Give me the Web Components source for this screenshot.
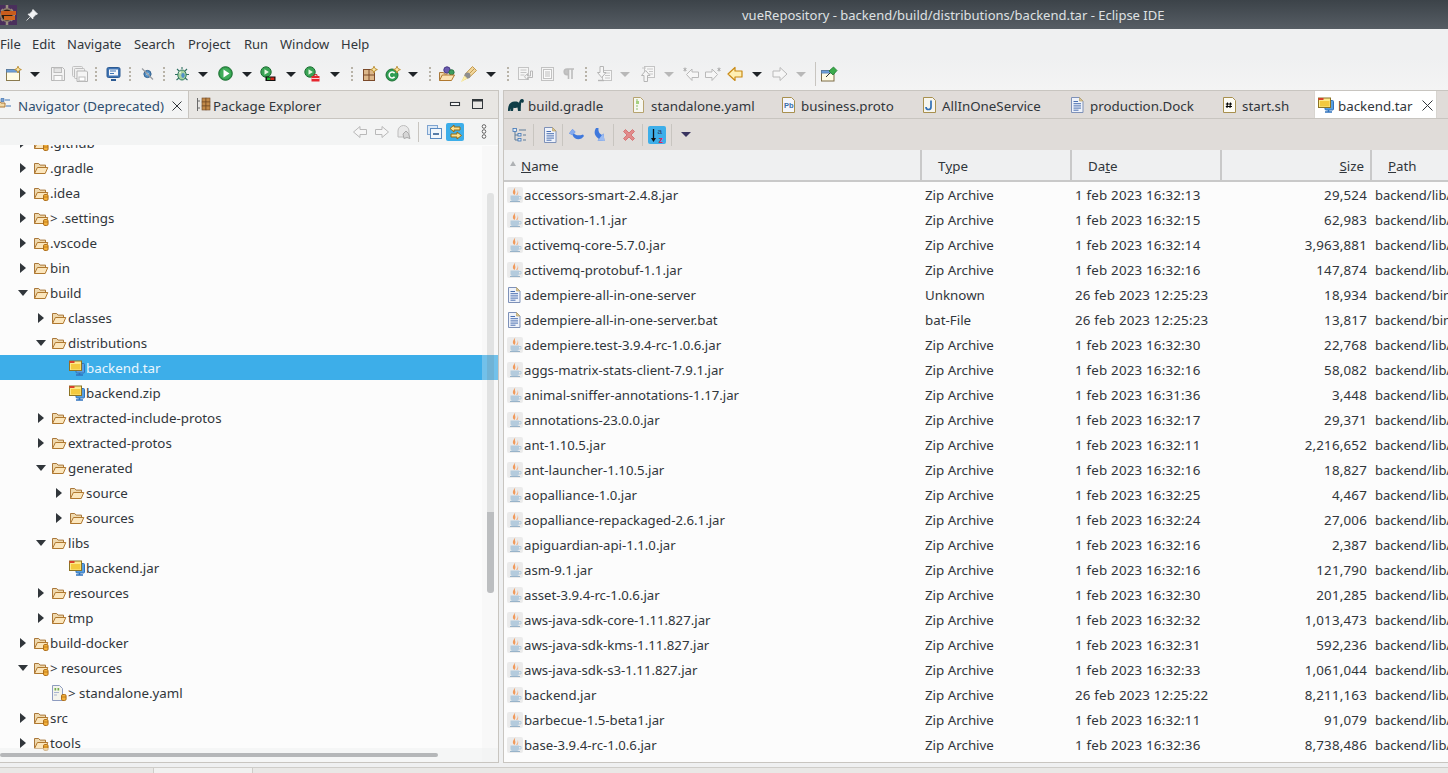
<!DOCTYPE html>
<html><head><meta charset="utf-8"><style>
html,body{margin:0;padding:0;height:773px;overflow:hidden;background:#eff0f1;font:13.33px "Noto Sans",sans-serif;color:#31363b}
</style></head><body>
<ide-window></ide-window>
<script>
const star=(x=11.5,y=3.5)=>`<path transform="translate(${x} ${y})" d="M0-3.4 1-1 3.4 0 1 1 0 3.4-1 1-3.4 0-1-1z" fill="#fbe9a8" stroke="#b98a2e" stroke-width=".9"/>`;
const lock=`<rect x="10.5" y="9.5" width="4.6" height="6" rx="1.4" fill="#f4b23c" stroke="#a8650f" stroke-width=".9"/><path d="M10.8 12h4.2" stroke="#a8650f" stroke-width=".7"/>`;
const folder=`<path d="M1.5 13.5V3.5h4.2l1.4 1.6h5.4v2.4" fill="#efd9ae" stroke="#a9773a"/><path d="M1.5 13.5 4.4 7.5h10.4l-2.6 6z" fill="#fbe6bd" stroke="#b0782f" stroke-linejoin="round"/>`;
const tar=`<path d="M7 15h7M10.5 12v3" stroke="#2f72bd" stroke-width="1.6"/><rect x="7" y="3.500" width="8.500" height="9.500" rx="1" fill="#5a9fe0" stroke="#2f72bd"/><rect x=".5" y="1" width="12" height="9.500" fill="#fde98a" stroke="#8c7424"/><rect x=".5" y="1" width="5" height="2" fill="#d8402c"/><rect x="2" y="4" width="9.500" height="5.500" fill="#f3c93f"/>`;
const ghostArrow=(d)=>`<path d="${d}" fill="#f6f6f6" stroke="#b9b9b9" stroke-linejoin="round"/>`;
const ICONS={
 newWizard:`<rect x=".5" y="3.5" width="13" height="11" fill="#fffbe4" stroke="#8a7a4e"/><rect x=".5" y="3.5" width="13" height="2.6" fill="#6f9fd8" stroke="#4f78a8" stroke-width=".6"/>${star(12,3.6)}`,
 save:`<path d="M1.5 1.5h11l2 2v11h-13z" fill="#f3f3f3" stroke="#b5b5b5"/><rect x="4" y="2" width="7.5" height="4.5" fill="#e4e4e4" stroke="#bdbdbd"/><rect x="4" y="9.5" width="8" height="5" fill="#fafafa" stroke="#bdbdbd"/>`,
 saveAll:`<rect x=".5" y=".5" width="10" height="10" rx="1" fill="#f0f0f0" stroke="#c2c2c2"/><rect x="2.5" y="2.5" width="10" height="10" rx="1" fill="#f0f0f0" stroke="#bdbdbd"/><path d="M5 5h9.5l1 1v9.5H5z" fill="#f5f5f5" stroke="#b5b5b5"/><rect x="7" y="11" width="6" height="4" fill="#fff" stroke="#bdbdbd"/>`,
 monitor:`<rect x="1" y="1.5" width="13" height="10" rx="1.5" fill="#3f74b5" stroke="#2c5a92"/><rect x="3" y="3.5" width="9" height="6" fill="#f3f6fa"/><path d="M4 5h6M4 7.5h4" stroke="#3f74b5" stroke-width="1.2"/><path d="M5 14h5" stroke="#2c5a92" stroke-width="2"/>`,
 skip:`<ellipse cx="7.5" cy="8" rx="3.6" ry="3.6" fill="#4f8fc7" stroke="#315f8c"/><circle cx="7.5" cy="8" r="1.2" fill="#cfe3f4"/><path d="M2 2.5 13 13.5" stroke="#9a9da2" stroke-width="1.3"/>`,
 bug:`<path d="M3 3l3 3M13 3l-3 3M1 8.5h3M15 8.5h-3M2.5 14l3-2.5M13.5 14l-3-2.5M8 1v2" stroke="#2f6f62" stroke-width="1.1"/><ellipse cx="8" cy="9" rx="4.2" ry="5" fill="#a9d3a0" stroke="#2f7a5e"/><ellipse cx="9" cy="9.5" rx="1.7" ry="2.4" fill="#4f8fc7"/><circle cx="6" cy="6.5" r="1" fill="#e9f5e4"/>`,
 run:`<circle cx="7.5" cy="7.5" r="6.8" fill="#2e9b48" stroke="#1d7034"/><circle cx="7.5" cy="7.5" r="5.4" fill="#41ad5b"/><path d="M5.5 3.6v7.8l6-3.9z" fill="#fff"/>`,
 runExt:`<circle cx="6" cy="6" r="5.2" fill="#3aa455" stroke="#1d7034"/><path d="M4.5 3.2v5.6l4.4-2.8z" fill="#e7f6e2"/><rect x="5.5" y="10.5" width="10" height="4.5" fill="#111"/><rect x="7" y="11.5" width="3.5" height="2.5" fill="#19b52f"/><rect x="10.5" y="11.5" width="3.8" height="2.5" fill="#d4261c"/>`,
 runTool:`<circle cx="6" cy="6" r="5.2" fill="#3aa455" stroke="#1d7034"/><path d="M4.5 3.2v5.6l4.4-2.8z" fill="#e7f6e2"/><rect x="7.5" y="10" width="8" height="5.5" fill="#e6262e"/><path d="M10 10V8.7h3V10" fill="none" stroke="#c01c22"/><path d="M7.5 12.5h8" stroke="#fff" stroke-width=".8"/>`,
 newPkg:`<rect x="1.5" y="3.5" width="11" height="11" fill="#dcb78a" stroke="#7b4a2a"/><path d="M7 3.5v11M1.5 9h11" stroke="#7b4a2a"/>${star(12,3.6)}`,
 newClass:`<circle cx="7" cy="9" r="6" fill="#2f9e52" stroke="#1d7034"/><path d="M9.6 7.2A3 3 0 1 0 9.6 10.8" fill="none" stroke="#fff" stroke-width="1.6"/>${star(12,3.6)}`,
 openRes:`<circle cx="8" cy="4" r="3.2" fill="#6b5bb0" stroke="#463a85"/><circle cx="12.5" cy="6.3" r="2.6" fill="#3d9d5e" stroke="#2a7343"/><path d="M.5 14.5V6.5h4l1 1.5h3" fill="#f2dcae" stroke="#a9773a"/><path d="M.5 14.5 3.3 9h12.2l-3 5.5z" fill="#fbe3b3" stroke="#b0782f" stroke-linejoin="round"/>`,
 pen:`<path d="M2 14 4.8 7.500 11.500 .5l4 4-7 6.700z" fill="#f1d69c" stroke="#c39a4e"/><path d="M9 7 13 3" stroke="#c39a4e"/><circle cx="6.500" cy="9.500" r="3" fill="#8e8e8e"/><path d="M.5 15.500 3.500 10l2.400 2.400z" fill="#fff0a8" stroke="#f5e7a0" stroke-width=".8"/>`,
 nextAnn:`<rect x=".5" y="1.5" width="10" height="12" fill="#f5f5f5" stroke="#c4c4c4"/><path d="M2.5 4h6M2.5 6.5h6M2.5 9h4" stroke="#c4c4c4"/><path d="M14.5 5v6.5H9.5V14l-3-3.2 3-3.2v2.4h3V5z" fill="#f6f6f6" stroke="#b9b9b9"/>`,
 blockSel:`<rect x="1.5" y="1.5" width="12" height="13" fill="#f5f5f5" stroke="#c2c2c2"/><rect x="3.5" y="3.5" width="8" height="9" fill="#fbfbfb" stroke="#c2c2c2"/><path d="M5 6h5M5 8h5M5 10h5" stroke="#bdbdbd"/>`,
 pilcrow:`<path d="M6.5 13V3H5a2.8 2.8 0 0 0 0 5.6h1.5M6.5 3H12M10 3v10" fill="#c4c4c4" stroke="#bcbcbc" stroke-width="1.6"/>`,
 nextDown:`<rect x="6.5" y="4.5" width="9" height="10" fill="#f7f7f7" stroke="#c4c4c4"/><path d="M9 7h5M9 9.5h5M9 12h5" stroke="#c8c8c8"/><path d="M4 .5h3.5v6H10L5.7 11.5 1.5 6.5H4z" fill="#f6f6f6" stroke="#b5b5b5"/><path d="M2 14.5h6" stroke="#b5b5b5" stroke-width="1.4"/>`,
 prevUp:`<rect x="4.5" y=".5" width="10" height="11" fill="#f7f7f7" stroke="#c4c4c4"/><path d="M7 3h6M9 5.5h4M9 8h4M2 2h4" stroke="#c8c8c8"/><path d="M4 15.5h3.5v-6H10L5.7 4.5 1.5 9.5H4z" fill="#f6f6f6" stroke="#b5b5b5"/>`,
 lastEdit:`<path d="M.5 2 3.500 5M3.500 2 .5 5M2 1.500v4" stroke="#a5a5a5" stroke-width=".9"/>${ghostArrow("M15.500 6v5.500H9V14.500L3.500 8.500 9 3v3z")}`,
 nextEdit:`<path d="M12.500 2 15.500 5M15.500 2 12.500 5M14 1.500v4" stroke="#a5a5a5" stroke-width=".9"/>${ghostArrow("M.5 6v5.500H7V14.500l5.500-6L7 3v3z")}`,
 back:`<path d="M15 5v6H8v3.5L1 8l7-6.5V5z" fill="#fff0b3" stroke="#c98a14" stroke-linejoin="round" stroke-width="1.2"/>`,
 fwdGhost:ghostArrow("M1 5v6h7v3.5L15 8 8 1.5V5z"),
 pinEditor:`<rect x=".5" y="4.5" width="12.5" height="10.5" fill="#fffbe4" stroke="#7c6c46"/><rect x=".5" y="4.5" width="12.5" height="2.6" fill="#6f9fd8" stroke="#4f78a8" stroke-width=".6"/><path d="M5 11 9 7" stroke="#333"/><path d="M8 5l4.500-4 3.500 3.500-4 4.500z" fill="#3cab4b" stroke="#207c30" stroke-width=".8"/>`,
 navIcon:`<path d="M-4 4.500h6l1 1.500h4v4H-4z" fill="#f1d9a6" stroke="#a9773a"/><path d="M3 1.500h3v3H3z" fill="#7ea4d0" stroke="#3f74b5" stroke-width=".7"/><path d="M7 3h5" stroke="#3f74b5"/><path d="M8 9h5" stroke="#3f74b5"/>`,
 pkg:`<path d="M.5 1v13M.5 4H3M.5 11H3" stroke="#6a6a6a"/><rect x="5" y="1" width="4" height="4" fill="#c28a4a" stroke="#6d4522" stroke-width=".6"/><rect x="9" y="1" width="4" height="4" fill="#c28a4a" stroke="#6d4522" stroke-width=".6"/><rect x="5" y="5" width="4" height="4" fill="#c28a4a" stroke="#6d4522" stroke-width=".6"/><rect x="9" y="5" width="4" height="4" fill="#c28a4a" stroke="#6d4522" stroke-width=".6"/><rect x="5" y="9" width="4" height="4" fill="#c28a4a" stroke="#6d4522" stroke-width=".6"/><rect x="9" y="9" width="4" height="4" fill="#c28a4a" stroke="#6d4522" stroke-width=".6"/>`,
 min:`<rect x="2.500" y="5.500" width="9" height="3" fill="#fff" stroke="#31363b" stroke-width="1.100"/>`,
 max:`<rect x="2.500" y="2.500" width="10" height="9" fill="none" stroke="#31363b"/><path d="M2.500 3.500h10" stroke="#31363b" stroke-width="2"/>`,
 vBack:ghostArrow("M14.500 5.500v5H8v3L1.500 8 8 2.500v3z"),
 vFwd:ghostArrow("M1.500 5.500v5H8v3L14.500 8 8 2.500v3z"),
 vSync:`<path d="M2 7a5.500 5.500 0 0 1 11 0v6H2z" fill="#e9e9e9" stroke="#bdbdbd"/><path d="M10 7 7 10 8 14.500l3-1 3 1-1.500-5z" fill="#d6d6d6" stroke="#a9a9a9"/>`,
 collapse:`<rect x=".5" y="1.500" width="10" height="9" fill="#dce9f6" stroke="#7ea4d0"/><rect x="3.500" y="4.500" width="11" height="10" fill="#f2f7fc" stroke="#5a8ac0"/><path d="M6 10h6" stroke="#2f5d93" stroke-width="1.600"/>`,
 link:`<path d="M7 1v2h6v3H7v2L3 4.500z" fill="#fbe08f" stroke="#9a6a10" stroke-linejoin="round"/><path d="M10 8v2H4v3h6v2l4.500-3.500z" fill="#fbe08f" stroke="#9a6a10" stroke-linejoin="round"/>`,
 kebab:`<circle cx="8" cy="2.500" r="1.800" fill="#fff" stroke="#555" stroke-width=".9"/><circle cx="8" cy="7.500" r="1.800" fill="#fff" stroke="#555" stroke-width=".9"/><circle cx="8" cy="12.500" r="1.800" fill="#fff" stroke="#555" stroke-width=".9"/>`,
 folder,folderL:folder+lock,
 tar,
 yaml:`<path d="M2.500 .5h7l3 3v12h-10z" fill="#f7f7f1" stroke="#b6a36e"/><path d="M6 2v11" stroke="#8bbf6a" stroke-width="1" stroke-dasharray="2 1"/><rect x="5" y="4" width="3" height="3" fill="#a5d080"/>`,
 yamlL:`<path d="M1.500 .5h7l3 3v12h-10z" fill="#f4f4ec" stroke="#8e9cc0"/><rect x="3.500" y="3" width="1.700" height="2.500" fill="#76ad50"/><rect x="6.500" y="3" width="1.700" height="2.500" fill="#76ad50"/><path d="M3 7.500h5M3 10h3" stroke="#a9b5cf"/>${lock}`,
 gradle:`<path d="M0 14c0-5 1-9 6.500-9.500 2-.2 3.500.4 4.500 1.200C11.500 3 13 1.500 14.500 2c1.500.5 1.800 2.500.8 3.500-.6.500-1.500.4-2-.2-.4 2-.5 5-.5 8.700H10l-.5-3.500c-1.300.6-2.700.6-4 .2L5 14H2.500l-.3-2.500L1.800 14z" fill="#0f3d47"/>`,
 proto:`<path d="M1.500 .5h9l3 3v12h-12z" fill="#f4f6fb" stroke="#a8904e"/><text x="3" y="11" font-family="Liberation Sans" font-size="7.500" font-weight="700" fill="#3a6ea8">Pb</text>`,
 java:`<path d="M1.500 .5h9l3 3v12h-12z" fill="#f7f6ef" stroke="#a8904e"/><path d="M9 3.500V10a2.500 2.500 0 0 1-5 0" fill="none" stroke="#2f6fb5" stroke-width="1.700"/>`,
 doc:`<path d="M1.500 .5h8l3.500 3.500v11.500H1.500z" fill="#eef2fa" stroke="#7e91b8"/><path d="M9.500 .5V4H13z" fill="#dcc590" stroke="#b6a06a" stroke-width=".7"/><path d="M3.500 4.500h4.500M3.500 6.700h7.500M3.500 8.900h7.500M3.500 11.100h7.500M3.500 13.200h5" stroke="#4a6fb0" stroke-width="1"/>`,
 sh:`<path d="M1.500 .5h9l3 3v12h-12z" fill="#fdfcf5" stroke="#a8904e"/><path d="M5.500 5.500 5 11M8.500 5.500 8 11M3.800 7H10M3.800 9.500H10" stroke="#000" stroke-width="1.100"/>`,
 jar:`<rect width="16" height="16" rx="2" fill="#ebebeb"/><path d="M8.500 .5C6.500 3 10 4.500 7.500 8 5 6 5.500 3.500 8.500 .5z" fill="#f09a5c"/><path d="M10.500 3c.5 2-.5 3.500-1.500 5h1.500c1-1.500 1-3.500 0-5z" fill="#f5b48a"/><path d="M3.500 8.500h8.500V12a2 2 0 0 1-2 2H5.500a2 2 0 0 1-2-2z" fill="#b4cbdd"/><path d="M12 9.500h2v2.500h-2" fill="none" stroke="#b4cbdd"/><path d="M3 14.500h10" stroke="#98b3c9" stroke-width="1"/>`,
 eTree:`<path d="M4 3.500v9.500M4 8h3M4 13h3" stroke="#5f7c99"/><rect x="2" y="1.500" width="3.500" height="3" fill="#dfeaf6" stroke="#3f74b5" stroke-width=".8"/><rect x="7" y="6.500" width="3" height="2.500" fill="#dfeaf6" stroke="#3f74b5" stroke-width=".8"/><rect x="7" y="11.500" width="3" height="2.500" fill="#dfeaf6" stroke="#3f74b5" stroke-width=".8"/><path d="M8 3h7M12 8h3M12 13h3" stroke="#5f7c99"/>`,
 undo:`<path d="M1 6.500 4.500 2 7.500 5 6 6.200C7.500 8.500 10.500 9 15 7.500L16 9C13.500 13 7 14 4.500 8z" fill="#3f78dc"/><path d="M1 6.500 4.500 2 7.500 5 6 6.200 4.500 8z" fill="#86abee"/>`,
 redo:`<path d="M5 1 7.500 1C7 5 9 7 11 8L12.500 6.500 13.500 14 6.500 13.500 8 12C3.500 9 2.500 5 5 1z" fill="#3f78dc"/><path d="M11 8 12.500 6.500 13.500 14 6.500 13.500 8 12z" fill="#9dbcf2"/>`,
 del:`<path d="M2.500 4.500 4.500 2.500 8 6l3.500-3.500 2 2L10 8l3.500 3.500-2 2L8 10l-3.500 3.500-2-2L6 8z" fill="#e28b8b" stroke="#d57777"/>`,
 sort:`<path d="M4.500 2v11" stroke="#111" stroke-width="1.300"/><path d="M2 11l2.500 4 2.500-4z" fill="#111"/><text x="8.500" y="7" font-family="Liberation Sans" font-size="8" fill="#2f3d66">a</text><text x="9.500" y="16" font-family="Liberation Sans" font-size="9" font-weight="700" fill="#cf2a5b">z</text>`
};
function def(name,html){customElements.define(name,class extends HTMLElement{constructor(){super();this.attachShadow({mode:'open'}).innerHTML=typeof html==='function'?html(this):html;}});}

class XIcon extends HTMLElement{connectedCallback(){if(this.shadowRoot)return;const n=this.getAttribute('n'),s=+(this.getAttribute('s')||16);this.attachShadow({mode:'open'}).innerHTML=`<style>:host{display:block;flex:none;width:${s}px;height:${s}px}svg{display:block;overflow:visible}</style><svg width="${s}" height="${s}" viewBox="0 0 16 16">${ICONS[n]||''}</svg>`;}}
customElements.define('x-icon',XIcon);

class DropArrow extends HTMLElement{connectedCallback(){if(this.shadowRoot)return;this.attachShadow({mode:'open'}).innerHTML=`<style>:host{display:block;flex:none;width:10px;height:5px;border-style:solid;border-width:5px 5px 0;box-sizing:border-box;border-color:${this.getAttribute('c')||'#1f2327'} transparent transparent}</style>`;}}
customElements.define('drop-arrow',DropArrow);

class Sep extends HTMLElement{connectedCallback(){if(this.shadowRoot)return;const dotted=this.hasAttribute('dots');this.attachShadow({mode:'open'}).innerHTML=`<style>:host{display:block;flex:none;width:${dotted?2:1}px;height:${this.getAttribute('h')||(dotted?14:24)}px;${dotted?'background:repeating-linear-gradient(#b8b3a8 0 2px,transparent 2px 4px)':'background:#c8c5c0'}}</style>`;}}
customElements.define('tool-sep',Sep);

class IconStrip extends HTMLElement{
 set items(list){let prev=0,h='';
  for(const [x,k,a] of list){const w=k==='a'?10:k==='d'?2:k==='l'?1:k==='b'?18:16;const m=x-prev;prev=x+w;
   const st=`margin-left:${m}px`;
   if(k==='a')h+=`<drop-arrow style="${st}" c="${a||'#1f2327'}"></drop-arrow>`;
   else if(k==='d')h+=`<tool-sep dots style="${st}"></tool-sep>`;
   else if(k==='l')h+=`<tool-sep style="${st}" h="${a||24}"></tool-sep>`;
   else if(k==='b')h+=`<span class="btn" style="${st}"><x-icon n="${a}"></x-icon></span>`;
   else h+=`<x-icon n="${k}" style="${st}"></x-icon>`;
  }
  this.attachShadow({mode:'open'}).innerHTML=`<style>:host{display:flex;align-items:center;height:100%}.btn{display:flex;align-items:center;justify-content:center;width:18px;height:18px;background:#3daee9;border-radius:2px;flex:none}</style>${h}`;
 }
}
customElements.define('icon-strip',IconStrip);

def('title-bar',`<style>:host{display:flex;align-items:center;height:29px;background:linear-gradient(#3c4349,#565d64);color:#dfe1e3;font-size:13px;flex:none}
.logo{width:17px;height:20px;flex:none}.pin{margin-left:9px;flex:none}.t{margin-left:704px;white-space:nowrap}</style>
<svg class="logo" viewBox="0 0 17 20" width="17" height="20"><rect width="17" height="20" fill="#4a2f5c"/><path d="M7 0v20M0 10h15M1.500 4.500l11 11M12.500 4.500l-11 11" stroke="#9a8f80" stroke-width="2.500"/><circle cx="7" cy="10" r="7" fill="#8d7e6d"/><circle cx="7" cy="10" r="5.500" fill="#2a1c12"/><rect x="1" y="6" width="15" height="4" fill="#c95c1d"/><rect x="4" y="11" width="11" height="4" fill="#d0661f"/></svg>
<svg class="pin" width="12" height="12" viewBox="0 0 12 12"><path d="M7 .5 11.500 5 9.500 5.800 7 8.500 6.800 10 2 5.200l1.500-.3L6.200 2.500zM3.800 8.200.5 11.500" fill="#f2f3f4" stroke="#f2f3f4" stroke-width=".8"/></svg>
<span class="t">vueRepository - backend/build/distributions/backend.tar - Eclipse IDE</span>`);

def('menu-bar',`<style>:host{display:flex;align-items:center;height:29px;background:#eff0f1;flex:none;white-space:nowrap;font-size:13px}span{display:block;flex:none}</style>
<span style="width:32px">File</span><span style="width:35px">Edit</span><span style="width:67px">Navigate</span><span style="width:54px">Search</span><span style="width:56px">Project</span><span style="width:36px">Run</span><span style="width:61px">Window</span><span>Help</span>`);

def('main-toolbar',`<style>:host{display:block;height:32px;background:linear-gradient(#eff0f1,#f4f4f4);flex:none}</style><icon-strip></icon-strip>`);

def('editor-tab',(el)=>`<style>:host{display:flex;align-items:center;height:100%;white-space:nowrap;flex:none;box-sizing:border-box;padding-top:2px}x-icon{margin-right:4px;margin-top:-2px}::slotted(svg){margin-left:9px}</style><x-icon n="${el.getAttribute('icon')}"></x-icon><slot></slot>`);

def('nav-panel',`<style>:host{display:flex;flex-direction:column;position:relative;width:498px;height:671px;border-top:1px solid #c8c5c0;border-bottom:1px solid #c8c5c0;border-right:1px solid #c8c5c0;flex:none;overflow:hidden;background:#fcfcfc}
.tabs{display:flex;height:27px;flex:none;background:#e8e6e3;align-items:center}
.t1{display:flex;align-items:center;height:100%;width:189px;background:#f3f4f4;border-right:1px solid #c8c5c0;flex:none;color:#2f4f6f;white-space:nowrap;padding-top:2px;box-sizing:border-box}
.t1 x-icon{margin-left:-2px;margin-right:4px;margin-top:-2px}
.t1 svg{margin-left:8px}
.t2{display:flex;align-items:center;margin-left:8px;white-space:nowrap;width:243px;padding-top:2px;flex:none}.t2 x-icon{margin-right:0;margin-top:-2px}
.mm{display:flex;gap:6px;margin-left:8px}
.bar{height:26px;flex:none;background:#f3f4f4;border-top:1px solid #c8c5c0}
.tree{flex:1;overflow:hidden;min-height:0;background:#fcfcfc}
tree-list{margin-top:-15px}
.track{position:absolute;right:0;top:55px;bottom:0;width:16px;background:rgba(238,240,240,.3)}
.th1{position:absolute;left:5px;top:47px;width:7px;height:319px;background:rgba(96,100,104,.15);border-radius:3px 3px 0 0}
.th2{position:absolute;left:5px;top:366px;width:7px;height:81px;background:#bcbec0;border-radius:0 0 3px 3px}
.htrack{position:absolute;left:0;right:0;bottom:0;height:14px;background:rgba(238,240,240,.55)}
.hth{position:absolute;left:0;top:5px;width:438px;height:4px;background:#b5b7b9;border-radius:2px}
</style>
<div class="tabs"><div class="t1"><x-icon n="navIcon"></x-icon>Navigator (Deprecated)<svg width="10" height="10" viewBox="0 0 10 10"><path d="M.5.500l9 9M9.500.500l-9 9" stroke="#31363b"/></svg></div>
<div class="t2"><x-icon n="pkg"></x-icon>Package Explorer</div><div class="mm"><x-icon n="min"></x-icon><x-icon n="max"></x-icon></div></div>
<div class="bar"><icon-strip id="vb"></icon-strip></div>
<div class="tree"><tree-list></tree-list></div>
<div class="track"><div class="th1"></div><div class="th2"></div></div>
<div class="htrack"><div class="hth"></div></div>`);

class TreeRow extends HTMLElement{connectedCallback(){if(this.shadowRoot)return;
 const l=+this.getAttribute('lv'),a=this.getAttribute('a'),n=this.getAttribute('n');
 const arrow=a==='o'?'<span class="ao"></span>':a==='c'?'<span class="ac"></span>':'';
 this.attachShadow({mode:'open'}).innerHTML=`<style>:host{display:flex;align-items:center;height:25px;white-space:nowrap;flex:none;padding-left:${18*l}px}
 :host([sel]){background:#3daee9;color:#eaf6fd}
 .aw{width:33px;display:flex;align-items:center;flex:none;justify-content:flex-start}
 .ao{display:block;margin-left:18px;border-style:solid;border-width:6px 5px 0;border-color:#31363b transparent transparent}
 .ac{display:block;margin-left:20px;border-style:solid;border-width:5px 0 5px 6px;border-color:transparent transparent transparent #31363b}
 x-icon{margin-right:1px}</style><span class="aw">${arrow}</span><x-icon n="${n}"></x-icon><slot></slot>`;}}
customElements.define('tree-row',TreeRow);

const TREE=[[0,'c','folderL','.github'],[0,'c','folder','.gradle'],[0,'c','folderL','.idea'],[0,'c','folderL','> .settings'],[0,'c','folderL','.vscode'],[0,'c','folder','bin'],[0,'o','folder','build'],[1,'c','folder','classes'],[1,'o','folder','distributions'],[2,'','tar','backend.tar',1],[2,'','tar','backend.zip'],[1,'c','folder','extracted-include-protos'],[1,'c','folder','extracted-protos'],[1,'o','folder','generated'],[2,'c','folder','source'],[2,'c','folder','sources'],[1,'o','folder','libs'],[2,'','tar','backend.jar'],[1,'c','folder','resources'],[1,'c','folder','tmp'],[0,'c','folderL','build-docker'],[0,'o','folderL','> resources'],[1,'','yamlL','> standalone.yaml'],[0,'c','folderL','src'],[0,'c','folderL','tools'],[0,'','folderL','']];
def('tree-list',`<style>:host{display:block}</style>`+TREE.map(([l,a,n,t,s])=>`<tree-row lv="${l}" a="${a}" n="${n}"${s?' sel':''}>${t}</tree-row>`).join(''));

const COLS='grid-template-columns:417px 150px 150px 150px 1fr';
class ArchRow extends HTMLElement{connectedCallback(){if(this.shadowRoot)return;
 const [n,t,d,s,p,ic]=JSON.parse(this.getAttribute('d'));
 this.attachShadow({mode:'open'}).innerHTML=`<style>:host{display:grid;${COLS};height:25px;align-items:center;white-space:nowrap;overflow:hidden}
 div{padding-left:4px;overflow:hidden}.n{display:flex;align-items:center;padding-left:3px;font-size:13.2px}.n x-icon{margin-right:1px}.s{text-align:right;padding:0 4px 0 0;letter-spacing:.2px}.d{letter-spacing:.2px}.p{font-size:13px}</style>
 <div class="n"><x-icon n="${ic}"></x-icon><span>${n}</span></div><div>${t}</div><div class="d">${d}</div><div class="s">${s}</div><div class="p">${p}</div>`;}}
customElements.define('arch-row',ArchRow);

def('arch-head',`<style>:host{display:grid;${COLS};height:30px;background:#eff0f1;border-bottom:2px solid #c9c9c9;white-space:nowrap;flex:none}
div{display:flex;align-items:center;padding:2px 0 0 16px;border-left:2px solid #c9c9c9;margin-left:-1px}
.n{border-left:0;margin:0;padding-left:17px;position:relative}.s{justify-content:flex-end;padding:2px 7px 0 0}
.m{position:absolute;left:6px;top:11px;width:0;height:0;border:solid transparent;border-width:0 3px 5px;border-bottom-color:#aeb1b4}</style>
<div class="n"><span class="m"></span><span><u>N</u>ame</span></div><div>T<u>y</u>pe</div><div>Da<u>t</u>e</div><div class="s"><u>S</u>ize</div><div><u>P</u>ath</div>`);

const J='Zip Archive',D='1 feb 2023 ',F='26 feb 2023 ';
const ROWS=[["accessors-smart-2.4.8.jar",J,D+"16:32:13","29,524"],["activation-1.1.jar",J,D+"16:32:15","62,983"],["activemq-core-5.7.0.jar",J,D+"16:32:14","3,963,881"],["activemq-protobuf-1.1.jar",J,D+"16:32:16","147,874"],["adempiere-all-in-one-server","Unknown",F+"12:25:23","18,934","backend/bin","doc"],["adempiere-all-in-one-server.bat","bat-File",F+"12:25:23","13,817","backend/bin","doc"],["adempiere.test-3.9.4-rc-1.0.6.jar",J,D+"16:32:30","22,768"],["aggs-matrix-stats-client-7.9.1.jar",J,D+"16:32:16","58,082"],["animal-sniffer-annotations-1.17.jar",J,D+"16:31:36","3,448"],["annotations-23.0.0.jar",J,D+"16:32:17","29,371"],["ant-1.10.5.jar",J,D+"16:32:11","2,216,652"],["ant-launcher-1.10.5.jar",J,D+"16:32:16","18,827"],["aopalliance-1.0.jar",J,D+"16:32:25","4,467"],["aopalliance-repackaged-2.6.1.jar",J,D+"16:32:24","27,006"],["apiguardian-api-1.1.0.jar",J,D+"16:32:16","2,387"],["asm-9.1.jar",J,D+"16:32:16","121,790"],["asset-3.9.4-rc-1.0.6.jar",J,D+"16:32:30","201,285"],["aws-java-sdk-core-1.11.827.jar",J,D+"16:32:32","1,013,473"],["aws-java-sdk-kms-1.11.827.jar",J,D+"16:32:31","592,236"],["aws-java-sdk-s3-1.11.827.jar",J,D+"16:32:33","1,061,044"],["backend.jar",J,F+"12:25:22","8,211,163"],["barbecue-1.5-beta1.jar",J,D+"16:32:11","91,079"],["base-3.9.4-rc-1.0.6.jar",J,D+"16:32:36","8,738,486"]];

def('editor-panel',`<style>:host{display:flex;flex-direction:column;flex:1;min-width:0;height:671px;border-top:1px solid #c8c5c0;border-bottom:1px solid #c8c5c0;border-left:1px solid #c8c5c0;background:#fcfcfc;overflow:hidden;margin-left:4px}
.tabs{display:flex;height:27px;background:#e0dcd9;flex:none;border-bottom:1px solid #c8c5c0;padding-left:4px}
.active{background:#fff;border-left:1px solid #d8d5d0;border-right:1px solid #d8d5d0;width:123px;padding-left:3px}
.bar{height:31px;background:#e0dcd9;flex:none}
.rows{flex:1;overflow:hidden;min-height:0;background:#fcfcfc}</style>
<div class="tabs">
<editor-tab icon="gradle" style="width:123px">build.gradle</editor-tab>
<editor-tab icon="yaml" style="width:150px">standalone.yaml</editor-tab>
<editor-tab icon="proto" style="width:141px">business.proto</editor-tab>
<editor-tab icon="java" style="width:148px">AllInOneService</editor-tab>
<editor-tab icon="doc" style="width:152px">production.Dock</editor-tab>
<editor-tab icon="sh" style="width:92px">start.sh</editor-tab>
<editor-tab icon="tar" class="active">backend.tar<svg width="11" height="11" viewBox="0 0 11 11"><path d="M.5.500l10 10M10.500.500l-10 10" stroke="#31363b"/></svg></editor-tab>
</div>
<div class="bar"><icon-strip id="eb"></icon-strip></div>
<arch-head></arch-head>
<div class="rows">`+ROWS.map(r=>{const a=[r[0],r[1],r[2],r[3],r[4]||'backend/lib/',r[5]||'jar'];return `<arch-row d='${JSON.stringify(a)}'></arch-row>`}).join('')+`</div>`);

def('status-bar',`<style>:host{display:flex;height:7px;background:#e9e8e6;border-top:1px solid #cfcdc9;flex:none;margin-top:4px}.s{margin-left:153px;width:98px;background:#f1f1f0;border-left:1px solid #cfcdc9;border-right:1px solid #cfcdc9}</style><div class="s"></div>`);

def('ide-window',`<style>:host{display:flex;flex-direction:column;width:1448px;height:773px;overflow:hidden}.work{display:flex;flex:none;height:673px}</style>
<title-bar></title-bar><menu-bar></menu-bar><main-toolbar></main-toolbar>
<div class="work"><nav-panel></nav-panel><editor-panel></editor-panel></div><status-bar></status-bar>`);

const win=document.querySelector('ide-window').shadowRoot;
win.querySelector('main-toolbar').shadowRoot.querySelector('icon-strip').items=[
[6,'newWizard'],[30,'a'],[50,'save'],[72,'saveAll'],[95,'d'],[106,'monitor'],[129,'d'],[140,'skip'],[163,'d'],[174,'bug'],[198,'a'],[218,'run'],[242,'a'],[260,'runExt'],[286,'a'],[304,'runTool'],[330,'a'],[351,'d'],[362,'newPkg'],[385,'newClass'],[408,'a'],[429,'d'],[439,'openRes'],[461,'pen'],[486,'a'],[507,'d'],[518,'nextAnn'],[540,'blockSel'],[562,'pilcrow'],[585,'d'],[596,'nextDown'],[620,'a','#b8b8b8'],[640,'prevUp'],[664,'a','#b8b8b8'],[683,'lastEdit'],[705,'nextEdit'],[727,'back'],[752,'a'],[772,'fwdGhost'],[796,'a','#b8b8b8'],[815,'l'],[821,'pinEditor']];
win.querySelector('nav-panel').shadowRoot.querySelector('#vb').items=[[352,'vBack'],[374,'vFwd'],[396,'vSync'],[418,'l',20],[427,'collapse'],[446,'b','link'],[476,'kebab']];
win.querySelector('editor-panel').shadowRoot.querySelector('#eb').items=[[7,'eTree'],[29,'l',22],[39,'doc'],[58,'l',22],[64,'undo'],[87,'redo'],[109,'l',22],[117,'del'],[138,'l',22],[144,'b','sort'],[167,'l',22],[177,'a','#3a3560']];
</script></body></html>
